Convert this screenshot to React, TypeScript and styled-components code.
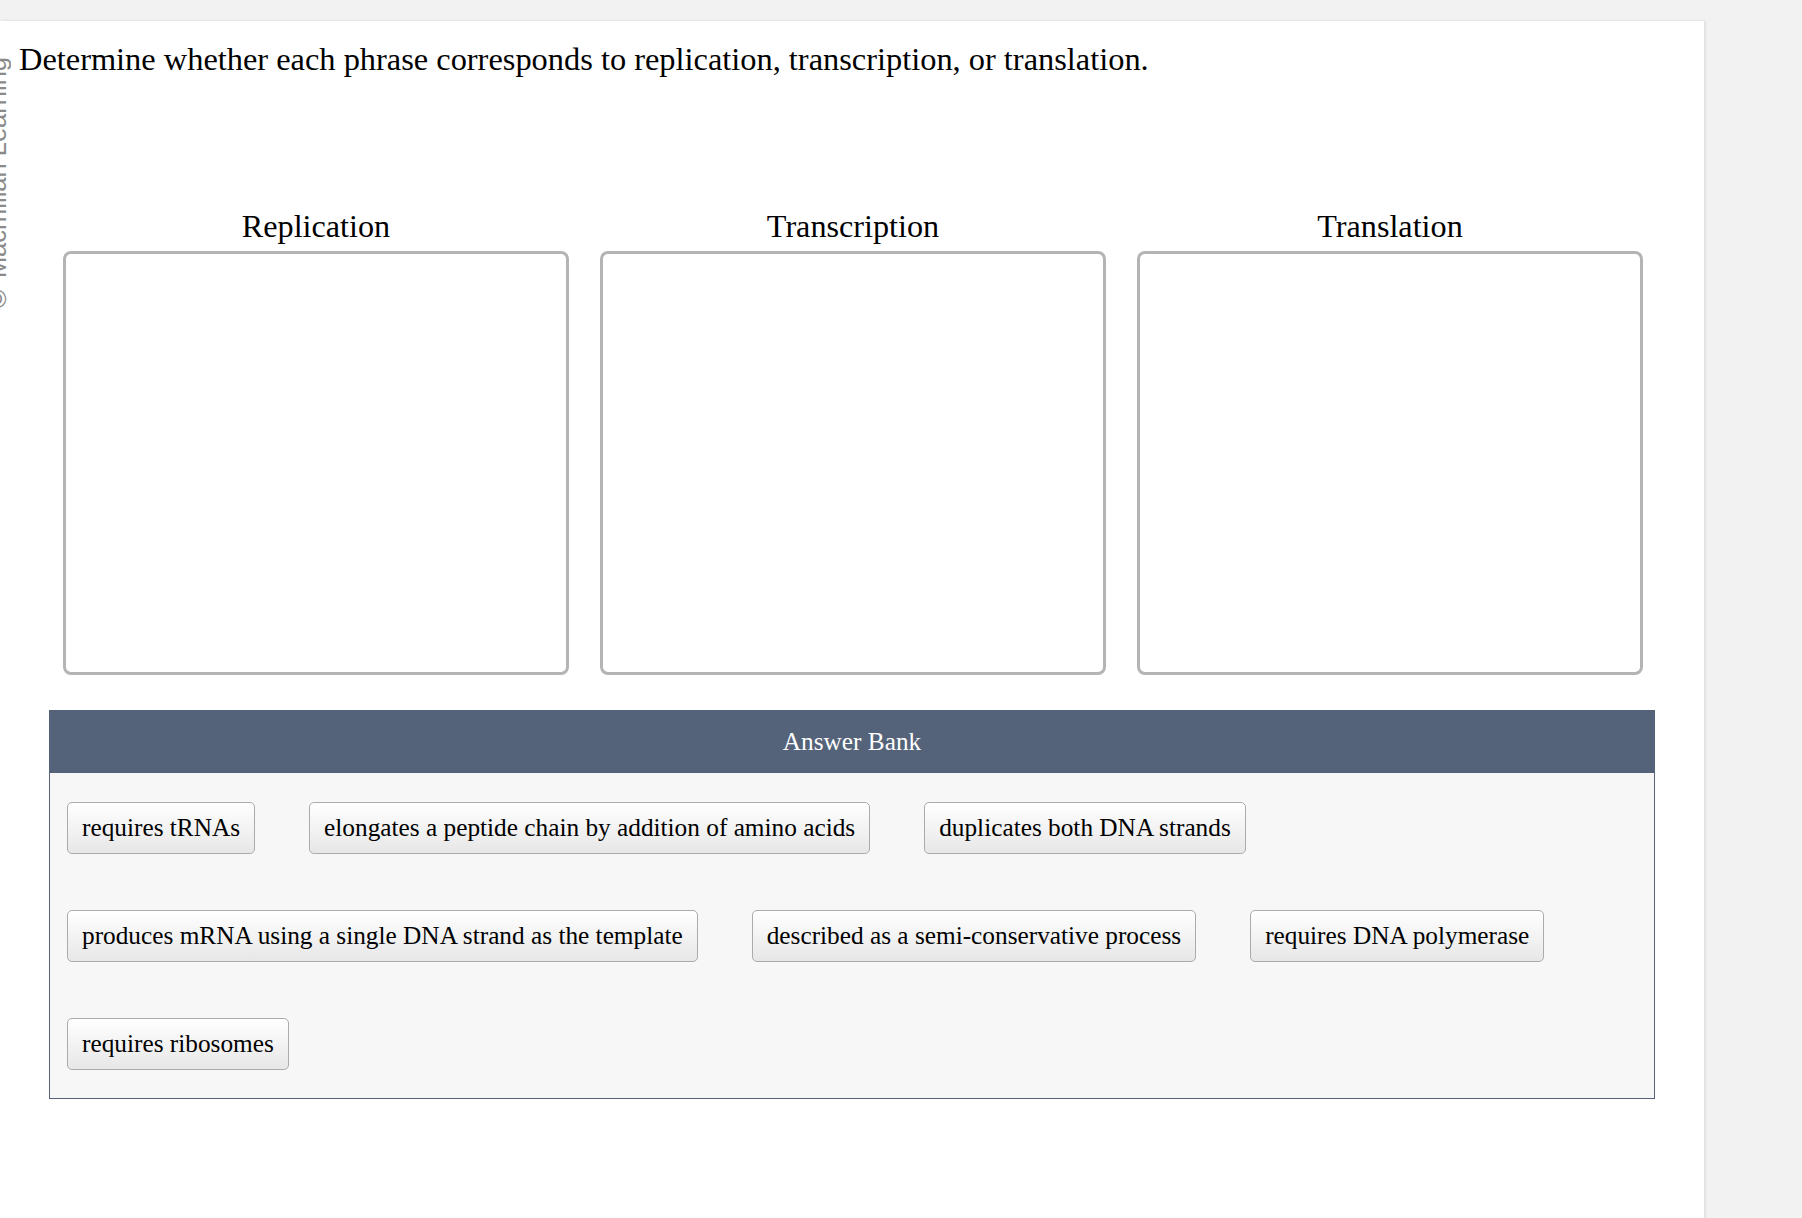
import styled, { createGlobalStyle } from 'styled-components';

const GlobalStyle = createGlobalStyle`
  html, body {
    margin: 0;
    padding: 0;
    background: #f2f2f2;
  }
  body {
    font-family: "Liberation Serif", "Times New Roman", serif;
    color: #000;
  }
`;

const Page = styled.div`
  padding-top: 21px;
  min-height: 1218px;
  box-sizing: border-box;
`;

const Panel = styled.div`
  position: relative;
  width: 1704px;
  min-height: 1197px;
  background: #fff;
  box-shadow: 1px 0 3px rgba(0, 0, 0, 0.12);
  padding-top: 20px;
  box-sizing: border-box;
`;

const Copyright = styled.div`
  position: absolute;
  left: -17px;
  top: 36px;
  writing-mode: vertical-rl;
  transform: rotate(180deg);
  font-family: "Liberation Sans", Arial, sans-serif;
  font-size: 25.5px;
  color: #8a8a8a;
  white-space: nowrap;
`;

const Question = styled.p`
  margin: 0;
  padding-left: 19px;
  font-size: 32.4px;
  line-height: normal;
`;

const Columns = styled.div`
  display: grid;
  grid-template-columns: repeat(3, 506px);
  column-gap: 31px;
  margin: 130px 0 0 63px;
`;

const Column = styled.div`
  display: flex;
  flex-direction: column;
  align-items: stretch;
`;

const Heading = styled.h3`
  margin: 0 0 6px;
  font-size: 32.2px;
  font-weight: normal;
  text-align: center;
  line-height: normal;
`;

const DropBox = styled.div`
  height: 424px;
  border: 3px solid #b4b4b4;
  border-radius: 8px;
  box-sizing: border-box;
`;

const Bank = styled.div`
  margin: 35px 0 0 49px;
  width: 1606px;
`;

const BankHeader = styled.div`
  height: 63px;
  background: #546379;
  color: #fff;
  font-size: 25.3px;
  display: flex;
  align-items: center;
  justify-content: center;
`;

const BankBody = styled.div`
  display: flex;
  flex-wrap: wrap;
  column-gap: 54px;
  row-gap: 56px;
  padding: 29px 17px 28px;
  background: #f7f7f7;
  border: 1px solid #56627a;
  border-top: none;
`;

const Chip = styled.div`
  font-size: 25.3px;
  line-height: 28px;
  padding: 10px 14px 12px;
  border: 1px solid #ababab;
  border-radius: 5px;
  background: linear-gradient(to bottom, #ffffff 0%, #e7e7e7 100%);
  white-space: nowrap;
  cursor: grab;
`;

const categories = ['Replication', 'Transcription', 'Translation'];

const answers = [
  'requires tRNAs',
  'elongates a peptide chain by addition of amino acids',
  'duplicates both DNA strands',
  'produces mRNA using a single DNA strand as the template',
  'described as a semi-conservative process',
  'requires DNA polymerase',
  'requires ribosomes',
];

export default function App() {
  return (
    <>
      <GlobalStyle />
      <Page>
        <Panel>
          <Copyright>© Macmillan Learning</Copyright>
          <Question>
            Determine whether each phrase corresponds to replication,
            transcription, or translation.
          </Question>
          <Columns>
            {categories.map((c) => (
              <Column key={c}>
                <Heading>{c}</Heading>
                <DropBox />
              </Column>
            ))}
          </Columns>
          <Bank>
            <BankHeader>Answer Bank</BankHeader>
            <BankBody>
              {answers.map((a) => (
                <Chip key={a}>{a}</Chip>
              ))}
            </BankBody>
          </Bank>
        </Panel>
      </Page>
    </>
  );
}
